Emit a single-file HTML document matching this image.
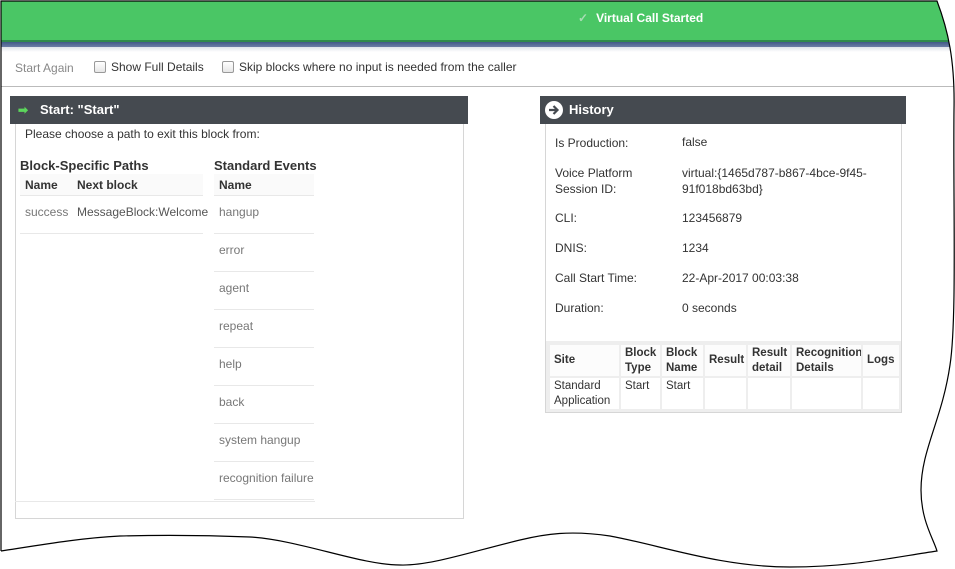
<!DOCTYPE html>
<html><head><meta charset="utf-8">
<style>
*{margin:0;padding:0;box-sizing:border-box}
html,body{width:955px;height:569px;overflow:hidden;background:#fff;font-family:"Liberation Sans",sans-serif;font-size:12px;color:#333}
.abs{position:absolute}
#green{left:0;top:0;width:955px;height:41px;background:#4ac665}
#g2{left:0;top:40px;width:955px;height:2px;background:#2f8a4a}
#blue{left:0;top:42px;width:955px;height:5px;background:linear-gradient(#3f5a86,#6d7ea6)}
#shade{left:0;top:47px;width:955px;height:5px;background:linear-gradient(#dfe3ea,#fff)}
#tb{left:0;top:86px;width:955px;height:1px;background:#bbb}
.hdr{background:#454a50;color:#fff;font-weight:bold;font-size:13px;height:28px;line-height:28px}
.body{border:1px solid #d6d6d6;border-top:none;background:#fff}
.cb{display:inline-block;width:12px;height:12px;border:1px solid #999;border-radius:2px;background:linear-gradient(#fff,#e6e6e6);vertical-align:-2px;margin-right:5px}
.row{position:absolute;height:38px;border-bottom:1px solid #e8e8e8;color:#777;padding:9px 0 0 5px}
.th{font-weight:bold;color:#333}
table{border-collapse:collapse;table-layout:fixed}
td{border:2px solid #eee;padding:1px 4px;vertical-align:top;font-size:11.5px;line-height:14.5px;overflow:hidden;white-space:nowrap}
</style></head><body>
<div class="abs" id="green"></div>
<div class="abs" id="g2"></div>
<div class="abs" id="blue"></div>
<div class="abs" id="shade"></div>
<div class="abs" style="left:578px;top:11px;color:#fff;font-weight:bold;font-size:12px"><span style="color:#a8dcb4;margin-right:8px">✓</span>Virtual Call Started</div>
<div class="abs" style="left:15px;top:61px;color:#888">Start Again</div>
<div class="abs" style="left:94px;top:60px"><span class="cb"></span>Show Full Details</div>
<div class="abs" style="left:222px;top:60px"><span class="cb"></span>Skip blocks where no input is needed from the caller</div>
<div class="abs" id="tb"></div>

<div class="abs hdr" style="left:10px;top:96px;width:458px;padding-left:30px"><span class="abs" style="left:8px;top:0;color:#5cd65c;font-size:12px">➡</span>Start: "Start"</div>
<div class="abs body" style="left:15px;top:124px;width:449px;height:395px"></div>
<div class="abs" style="left:25px;top:127px">Please choose a path to exit this block from:</div>
<div class="abs th" style="left:20px;top:158px;font-size:13px">Block-Specific Paths</div>
<div class="abs th" style="left:214px;top:158px;font-size:13px">Standard Events</div>
<div class="abs" style="left:20px;top:174px;width:183px;height:22px;background:#fafafa;border-bottom:1px solid #e8e8e8"></div>
<div class="abs" style="left:214px;top:174px;width:100px;height:22px;background:#fafafa;border-bottom:1px solid #e8e8e8"></div>
<div class="abs th" style="left:25px;top:178px">Name</div>
<div class="abs th" style="left:77px;top:178px">Next block</div>
<div class="abs th" style="left:219px;top:178px">Name</div>
<div class="row" style="left:20px;top:196px;width:183px">success<span style="position:absolute;left:57px;color:#555">MessageBlock:Welcome</span></div>
<div class="row" style="left:214px;top:196px;width:100px">hangup</div>
<div class="row" style="left:214px;top:234px;width:100px">error</div>
<div class="row" style="left:214px;top:272px;width:100px">agent</div>
<div class="row" style="left:214px;top:310px;width:100px">repeat</div>
<div class="row" style="left:214px;top:348px;width:100px">help</div>
<div class="row" style="left:214px;top:386px;width:100px">back</div>
<div class="row" style="left:214px;top:424px;width:100px">system hangup</div>
<div class="row" style="left:214px;top:462px;width:100px">recognition failure</div>
<div class="abs" style="left:15px;top:501px;width:300px;height:1px;background:#e8e8e8"></div>

<div class="abs hdr" style="left:540px;top:96px;width:366px;padding-left:29px">
<svg class="abs" style="left:5px;top:5px" width="18" height="18" viewBox="0 0 18 18"><circle cx="9" cy="9" r="9" fill="#fff"/><path d="M4 9h8M8.5 5l4 4-4 4" stroke="#454a50" stroke-width="2.2" fill="none"/></svg>History</div>
<div class="abs body" style="left:545px;top:124px;width:357px;height:289px"></div>
<div class="abs" style="left:555px;top:135px;line-height:16px">Is Production:</div><div class="abs" style="left:682px;top:135px">false</div>
<div class="abs" style="left:555px;top:165px;line-height:16px">Voice Platform<br>Session ID:</div><div class="abs" style="left:682px;top:165px;line-height:16px">virtual:{1465d787-b867-4bce-9f45-<br>91f018bd63bd}</div>
<div class="abs" style="left:555px;top:211px">CLI:</div><div class="abs" style="left:682px;top:211px">123456879</div>
<div class="abs" style="left:555px;top:241px">DNIS:</div><div class="abs" style="left:682px;top:241px">1234</div>
<div class="abs" style="left:555px;top:271px">Call Start Time:</div><div class="abs" style="left:682px;top:271px">22-Apr-2017 00:03:38</div>
<div class="abs" style="left:555px;top:301px">Duration:</div><div class="abs" style="left:682px;top:301px">0 seconds</div>
<div class="abs" style="left:545px;top:341px;width:357px;height:72px;background:#eee;border:1px solid #d6d6d6;border-top:none"></div>
<table class="abs" style="left:548px;top:343px;width:351px;background:#fff">
<colgroup><col style="width:71px"><col style="width:41px"><col style="width:43px"><col style="width:43px"><col style="width:44px"><col style="width:71px"><col style="width:38px"></colgroup>
<tr style="background:#fcfcfc;font-weight:bold"><td style="vertical-align:middle">Site</td><td>Block<br>Type</td><td>Block<br>Name</td><td style="vertical-align:middle">Result</td><td>Result<br>detail</td><td>Recognition<br>Details</td><td style="vertical-align:middle">Logs</td></tr>
<tr><td>Standard<br>Application</td><td>Start</td><td>Start</td><td></td><td></td><td></td><td></td></tr>
</table>

<svg class="abs" style="left:0;top:0" width="955" height="569" viewBox="0 0 955 569">
<path fill="#fff" fill-rule="evenodd" d="M0 0H955V569H0Z M1 1 L937 1 C948 30 955 60 954 110 C953 200 957 320 950 365 C942 420 921 450 921 490 C921 520 933 538 937 551 C890 558 850 567 790 567 C720 567 660 545 610 536 C570 530 545 534 520 540 C470 552 430 566 400 565 C360 565 300 540 250 537 C200 535 160 535 120 536 C80 538 40 545 1 551 Z"/>
<path fill="none" stroke="#000" stroke-width="1.2" d="M1 551 L1 1 L937 1 C948 30 955 60 954 110 C953 200 957 320 950 365 C942 420 921 450 921 490 C921 520 933 538 937 551 C890 558 850 567 790 567 C720 567 660 545 610 536 C570 530 545 534 520 540 C470 552 430 566 400 565 C360 565 300 540 250 537 C200 535 160 535 120 536 C80 538 40 545 1 551"/>
</svg>
</body></html>
